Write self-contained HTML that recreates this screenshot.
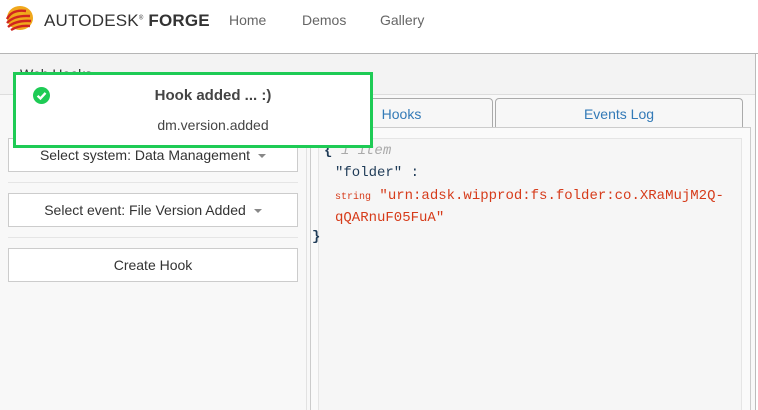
<!DOCTYPE html>
<html style="overflow:hidden;height:410px"><head><style>
body{margin:0;width:758px;height:410px;overflow:hidden;background:#fff;font-family:"Liberation Sans",sans-serif;position:relative}
.a{position:absolute}
.btn{position:absolute;left:8px;width:288px;height:32px;border:1px solid #ccc;background:#fff;font-size:14px;color:#333;text-align:center;line-height:32px;box-sizing:content-box}
.car{display:inline-block;width:0;height:0;border-left:4px solid transparent;border-right:4px solid transparent;border-top:4px solid #888;vertical-align:middle;margin-left:8px}
.mono{font-family:"Liberation Mono",monospace;font-size:14px}
</style></head><body>
<svg class="a" style="left:4px;top:5px" width="30" height="28" viewBox="0 0 30 28">
<ellipse cx="16" cy="13" rx="13" ry="12" fill="#f0a81c"/>
<path d="M3 14 Q8 4 22 6 M3 18 Q10 10 26 11 M4 22 Q12 15 27 16 M7 25 Q15 20 26 21" stroke="#d0251f" stroke-width="2.4" fill="none"/>
</svg>
<div class="a" style="left:44px;top:11px;font-size:17px;color:#333;letter-spacing:0.2px">AUTODESK<sup style="font-size:6px">®</sup> <b>FORGE</b></div>
<div class="a" style="left:229px;top:12px;font-size:14px;color:#666">Home</div>
<div class="a" style="left:302px;top:12px;font-size:14px;color:#666">Demos</div>
<div class="a" style="left:380px;top:12px;font-size:14px;color:#666">Gallery</div>
<div class="a" style="left:0;top:53px;width:758px;height:1px;background:#b5b5b5"></div>
<div class="a" style="left:0;top:54px;width:755px;height:40px;background:#f3f3f3;border-bottom:1px solid #ddd"></div>
<div class="a" style="left:755px;top:54px;width:1px;height:356px;background:#bbb"></div>
<div class="a" style="left:20px;top:66px;font-size:14px;color:#333">Web Hooks</div>
<div class="a" style="left:0;top:95px;width:755px;height:315px;background:#f8f8f8"></div>
<div class="a" style="left:306px;top:95px;width:1px;height:315px;background:#e2e2e2"></div>
<div class="btn" style="top:138px">Select system: Data Management<span class="car"></span></div>
<div class="a" style="left:8px;top:182px;width:290px;height:1px;background:#e5e5e5"></div>
<div class="btn" style="top:193px">Select event: File Version Added<span class="car"></span></div>
<div class="a" style="left:8px;top:237px;width:290px;height:1px;background:#e5e5e5"></div>
<div class="btn" style="top:248px">Create Hook</div>
<div class="a" style="left:310px;top:98px;width:181px;height:29px;border:1px solid #aaa;border-bottom:none;border-radius:4px 4px 0 0;background:#f7f7f7;color:#337ab7;font-size:14px;line-height:30px;text-align:center">Hooks</div>
<div class="a" style="left:495px;top:98px;width:246px;height:29px;border:1px solid #aaa;border-bottom:none;border-radius:4px 4px 0 0;background:#f7f7f7;color:#337ab7;font-size:14px;line-height:30px;text-align:center">Events Log</div>
<div class="a" style="left:310px;top:127px;width:439px;height:283px;border:1px solid #ccc;border-bottom:none;background:#fafafa"></div>
<div class="a" style="left:318px;top:138px;width:422px;height:272px;border:1px solid #e5e5e5;border-bottom:none;background:#f6f6f6"></div>
<div class="a mono" style="left:324px;top:143px;color:#1f3b57"><b>{</b> <i style="color:#aaa">1 item</i></div>
<div class="a mono" style="left:335px;top:165px;color:#1f3b57">"folder" :</div>
<div class="a mono" style="left:335px;top:186px;color:#d63b1a;line-height:21px"><span style="font-size:10px">string</span> "urn:adsk.wipprod:fs.folder:co.XRaMujM2Q-<br>qQARnuF05FuA"</div>
<div class="a mono" style="left:312px;top:229px;color:#1f3b57"><b>}</b></div>
<div class="a" style="left:13px;top:72px;width:354px;height:70px;border:3px solid #1ecb55;background:#fff"></div>
<svg class="a" style="left:33px;top:87px" width="17" height="17" viewBox="0 0 16 16"><circle cx="8" cy="8" r="8" fill="#1ecb55"/><path d="M4.3 8.3 L7 10.8 L11.8 5.6" stroke="#fff" stroke-width="2.2" fill="none"/></svg>
<div class="a" style="left:36px;top:87px;width:354px;text-align:center;font-size:15px;font-weight:bold;color:#444">Hook added ... :)</div>
<div class="a" style="left:36px;top:117px;width:354px;text-align:center;font-size:14px;color:#444">dm.version.added</div>
</body></html>
